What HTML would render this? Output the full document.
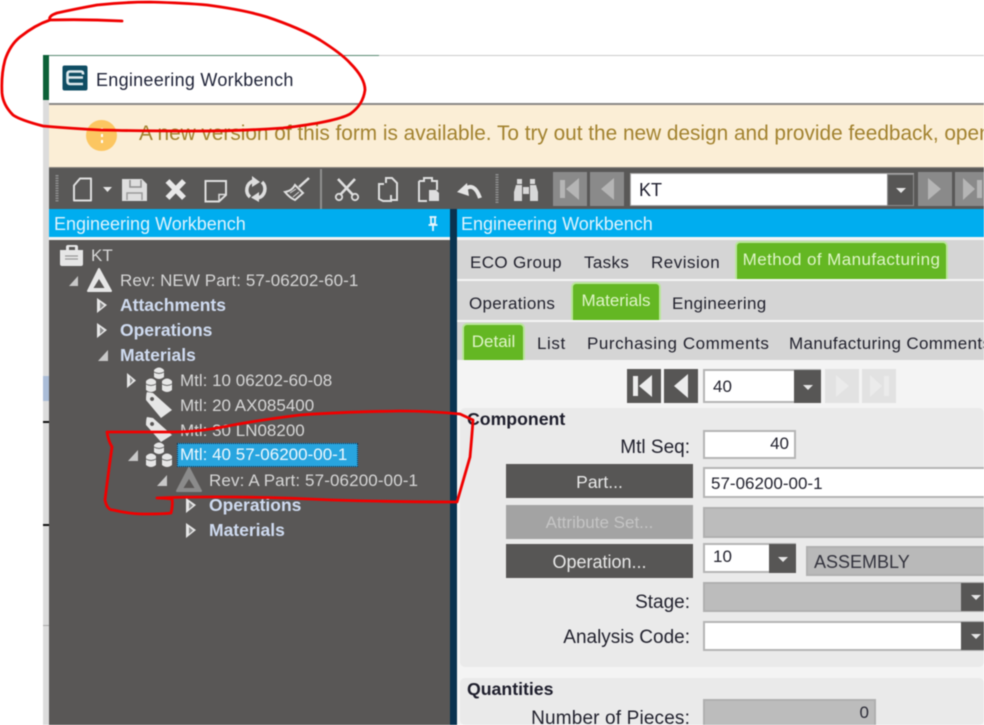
<!DOCTYPE html>
<html><head><meta charset="utf-8"><style>
html,body{margin:0;padding:0;background:#fff}
#r{position:relative;width:984px;height:725px;overflow:hidden;background:#fff;font-family:"Liberation Sans",sans-serif;filter:blur(.5px)}
#r div{position:absolute;box-sizing:border-box;white-space:nowrap}
.t{font-size:17px;line-height:20px;color:#d6d6d6}
.b{font-weight:bold;color:#cfdbf0;font-size:17.500px}
.l{font-size:17px;color:#22222e;line-height:20px}
.lb{text-align:right;width:240px;left:450px;font-size:19px}
.tab{background:#64b723;color:#dff5c8;border:2px solid #b9e59b;border-bottom:0;border-radius:5px 5px 0 0;text-align:center}
.f{background:#fff;border:2px solid #b5b5b5;color:#22222e;font-size:17px;line-height:26px}
.dis{background:#bcbcbc;border:2px solid #b0b0b0}
.btn{background:#575655;color:#e8e8e8;font-size:17.500px;text-align:center;line-height:36px}
.dd{background:#575655}
.dd:after{content:"";position:absolute;left:50%;top:50%;margin:-2px 0 0 -5px;border:5px solid transparent;border-top:5px solid #e6e6e6;border-bottom:0}
</style></head><body><div id="r">

<div style="left:43px;top:55px;width:6px;height:670px;background:#dcdcdc"></div>
<div style="left:43px;top:55px;width:6px;height:45px;background:#0d6138"></div>
<div style="left:43px;top:376px;width:6px;height:25px;background:#abbdd8"></div>
<div style="left:43px;top:421px;width:6px;height:2px;background:#111"></div>
<div style="left:43px;top:524px;width:6px;height:2px;background:#111"></div>
<div style="left:43px;top:625px;width:6px;height:1px;background:#aaa"></div>
<div style="left:49px;top:55px;width:330px;height:1px;background:#5a8a72"></div>
<div style="left:379px;top:55px;width:605px;height:1px;background:#ccc"></div>

<div style="left:49px;top:56px;width:935px;height:47px;background:#fff"></div>
<div style="left:49px;top:103px;width:935px;height:2px;background:#8a8886"></div>
<svg style="position:absolute;left:62px;top:65px" width="26" height="26" viewBox="0 0 26 26"><rect x="0.5" y="0.5" width="25" height="25" rx="2" fill="#0f4d63"/><path d="M21 9.500V8.500Q21 6.500 19 6.500H8Q5.500 6.500 5.500 9V16Q5.500 19 8 19H21M6 12.500H21" fill="none" stroke="#dfeaee" stroke-width="2.600"/></svg>
<div style="left:96px;top:69px;font-size:18px;line-height:22px;color:#1f2338;letter-spacing:.28px">Engineering Workbench</div>

<div style="left:49px;top:105px;width:935px;height:62px;background:#fbeed6"></div>
<div style="left:86px;top:120px;width:31px;height:31px;border-radius:50%;background:#fcc661"></div>
<div style="left:100.500px;top:128px;width:2px;height:2.500px;background:#fff"></div>
<div style="left:100.500px;top:134px;width:2px;height:2.500px;background:#fff"></div>
<div style="left:100.500px;top:140px;width:2px;height:2.500px;background:#fff"></div>
<div style="left:139px;top:122px;font-size:20.800px;line-height:24px;color:#a2822f">A new version of this form is available. To try out the new design and provide feedback, open</div>

<div style="left:49px;top:167px;width:935px;height:42px;background:#595857;border-top:1px solid #8a8580"></div>
<svg style="position:absolute;left:50px;top:168px" width="934" height="41" viewBox="50 168 934 41" fill="none" stroke="#dedede">
<path d="M57 175V202" stroke="#8d8d8d" stroke-width="3" stroke-dasharray="1.500 1"/>
<path d="M497 174V203" stroke="#8d8d8d" stroke-width="3" stroke-dasharray="1.500 1"/>
<path d="M80 178.500H91V200.500H74V185.500Z" stroke-width="2" stroke-linejoin="round"/>
<path d="M103 187H112L107.500 192Z" fill="#e6e6e6" stroke="none"/>
<path d="M122 179H142L147 184V201H122Z" fill="#dedede" stroke="none"/>
<path d="M130 180V187H141V180" stroke="#8e8e8e" stroke-width="1.500"/>
<path d="M127 200V193H142V200" stroke="#9a9a9a" stroke-width="1.500"/>
<path d="M167.500 181L184 198M184 181L167.500 198" stroke-width="5.500" stroke="#e8e8e8"/>
<path d="M205.500 181H226V195L219 201.500H205.500Z" stroke-width="2"/><path d="M219 201V194.500H226" stroke-width="1.500"/>
<path d="M250 197A9.500 9.500 0 0 1 253 181" stroke-width="3.500"/><path d="M252 176L260 182L252 187Z" fill="#dedede" stroke="none"/>
<path d="M262 182A9.500 9.500 0 0 1 258 198" stroke-width="3.500"/><path d="M259 192L251 197.500L259 202Z" fill="#dedede" stroke="none"/>
<path d="M309 178L299 187" stroke-width="2.500"/><path d="M295 185L303 193L295 200Q290 198 285 192Q292 191 295 185Z" stroke-width="2"/><path d="M290 193L296 189M293 197L299 192" stroke-width="1"/>
<path d="M321 169V209" stroke="#8f8f8f" stroke-width="2"/>
<path d="M338 179L353 195M355 179L340 195" stroke-width="2.600"/><circle cx="339" cy="197" r="3.200" stroke-width="1.800"/><circle cx="355" cy="197" r="3.200" stroke-width="1.800"/>
<path d="M386 183V178H392L397 183V200H384V190" stroke-width="2"/><path d="M384 184H379V199L383 201H391V195" stroke-width="2" fill="#595857"/>
<path d="M419 181H424V178H432V181H437V190M419 181V201H427" stroke-width="2"/><path d="M429 190H436L439 193V201H429Z" fill="#dedede" stroke="none"/>
<path d="M464 190Q474 181 480 198" stroke-width="4" stroke="#e4e4e4"/><path d="M457 192L467 183L469 196Z" fill="#e4e4e4" stroke="none"/>
<path d="M516 185H522V201H514V192ZM530 185H536L538 192V201H530ZM523 187H529V194H523ZM517 179H522V184H517ZM530 179H535V184H530Z" fill="#d8d8d8" stroke="none"/>
</svg>

<div style="left:553px;top:172px;width:34px;height:34px;background:#8a8a8a"></div>
<svg style="position:absolute;left:553px;top:172px" width="34" height="34"><path d="M7 8H12V26H7ZM26 6V28L13 17Z" fill="#b5b5b5"/></svg>
<div style="left:590px;top:172px;width:34px;height:34px;background:#8a8a8a"></div>
<svg style="position:absolute;left:590px;top:172px" width="34" height="34"><path d="M24 6V28L11 17Z" fill="#b5b5b5"/></svg>
<div style="left:630px;top:173px;width:284px;height:33px;background:#fff;border:1px solid #aaa;font-size:18px;line-height:32px;padding-left:8px;color:#1c1c2c">KT</div>
<div class="dd" style="left:887px;top:174px;width:27px;height:32px;border:1px solid #8d8d8d"></div>
<div style="left:918px;top:172px;width:34px;height:34px;background:#8a8a8a"></div>
<svg style="position:absolute;left:918px;top:172px" width="34" height="34"><path d="M10 6V28L23 17Z" fill="#b5b5b5"/></svg>
<div style="left:955px;top:172px;width:34px;height:34px;background:#8a8a8a"></div>
<svg style="position:absolute;left:955px;top:172px" width="34" height="34"><path d="M8 6V28L20 17Z M22 8H27V26H22Z" fill="#b5b5b5"/></svg>

<div style="left:49px;top:209px;width:401px;height:28px;background:#00adef;color:#dff3fd;font-size:18px;line-height:30px;padding-left:5px">Engineering Workbench</div>
<svg style="position:absolute;left:426px;top:216px" width="14" height="16"><path d="M3.500 1H10.500M5 1V8H9V1M2.500 9H11.500M7 9V15" fill="none" stroke="#e6f5fc" stroke-width="1.800"/></svg>
<div style="left:49px;top:237px;width:401px;height:3px;background:#f2f2f2"></div>
<div style="left:49px;top:240px;width:401px;height:485px;background:#595756"></div>
<div style="left:450px;top:209px;width:7px;height:516px;background:#0a3350"></div>
<div style="left:457px;top:209px;width:527px;height:28px;background:#00adef;color:#dff3fd;font-size:18px;line-height:30px;padding-left:4px">Engineering Workbench</div>
<div style="left:457px;top:237px;width:527px;height:488px;background:#f4f4f4"></div>

<svg style="position:absolute;left:50px;top:240px" width="220" height="310" viewBox="50 240 220 310">
<g fill="#e6e6e6">
<path d="M61 250H66V247Q66 245 68 245H76Q78 245 78 247V250H83V264Q83 266 81 266H62Q60 266 60 264V250Z"/>
<path d="M69 247H75V250H69Z" fill="#595756"/><path d="M65 256H78M65 259H78" stroke="#9a9a9a" stroke-width="1.200"/>
<path d="M99 269L111 291H88Z" stroke="#e6e6e6" stroke-width="2" stroke-linejoin="round"/>
<path d="M99 279L104.500 288H93.500Z" fill="#595756"/>
<path d="M78 276V286H69Z" fill="#c8c8c8"/>
<path d="M97 298L107 305L97 313Z"/><path d="M100 302V309L104 305.500Z" fill="#8a8a8a"/>
<path d="M97 323L107 330L97 338Z"/><path d="M100 327V334L104 330.500Z" fill="#8a8a8a"/>
<path d="M108 350V361H98Z" fill="#c8c8c8"/>
<path d="M127 373L136 380.500L127 388Z"/><path d="M130 377V384L133 380.500Z" fill="#8a8a8a"/>
<path d="M138 450V461H128Z" fill="#c8c8c8"/>
<path d="M167 475V486H157Z" fill="#c8c8c8"/>
<path d="M186 498L196 505L186 513Z"/><path d="M189 502V509L193 505.500Z" fill="#8a8a8a"/>
<path d="M186 523L196 530L186 538Z"/><path d="M189 527V534L193 530.500Z" fill="#8a8a8a"/>
<path d="M147 392L153 393L172 410L161 418L146 400Q146 394 147 392ZM152 397A2 2 0 1 0 152.100 397Z" fill-rule="evenodd"/>
<path d="M147 417L153 418L172 435L161 442L146 425Q146 419 147 417ZM152 422A2 2 0 1 0 152.100 422Z" fill-rule="evenodd"/>
<path d="M189 468L201 491H177Z" fill="#8b8b8b" stroke="#8b8b8b" stroke-width="2" stroke-linejoin="round"/>
<path d="M189 479L194.500 488H183.500Z" fill="#595756"/>
</g>
<g fill="#e6e6e6">
<path d="M154 370Q159 365 164 370V377Q159 381 154 377Z"/><path d="M146 381Q151 376 156 381V390Q151 394 146 390Z"/><path d="M162 381Q167 376 172 381V390Q167 394 162 390Z"/>
<path d="M154 372Q159 375 164 372M146 384Q151 387 156 384M162 384Q167 387 172 384" stroke="#666" fill="none"/>
<path d="M154 445Q159 440 164 445V452Q159 456 154 452Z"/><path d="M146 456Q151 451 156 456V465Q151 469 146 465Z"/><path d="M162 456Q167 451 172 456V465Q167 469 162 465Z"/>
<path d="M154 447Q159 450 164 447M146 459Q151 462 156 459M162 459Q167 462 172 459" stroke="#666" fill="none"/>
</g>
</svg>

<div class="t" style="left:91px;top:246px">KT</div>
<div class="t" style="left:120px;top:271px;letter-spacing:.08px">Rev: NEW Part: 57-06202-60-1</div>
<div class="t b" style="left:120px;top:295px">Attachments</div>
<div class="t b" style="left:120px;top:320px">Operations</div>
<div class="t b" style="left:120px;top:345px">Materials</div>
<div class="t" style="left:180px;top:371px">Mtl: 10 06202-60-08</div>
<div class="t" style="left:180px;top:396px">Mtl: 20 AX085400</div>
<div class="t" style="left:180px;top:421px">Mtl: 30 LN08200</div>
<div class="t" style="left:177px;top:443px;width:181px;height:24px;background:#28a5df;border:1px dotted #0a2a4a;color:#eef8fe;padding:1px 0 0 2px">Mtl: 40 57-06200-00-1</div>
<div class="t" style="left:209px;top:471px;letter-spacing:.12px">Rev: A Part: 57-06200-00-1</div>
<div class="t b" style="left:209px;top:495px">Operations</div>
<div class="t b" style="left:209px;top:520px">Materials</div>

<div style="left:457px;top:240px;width:527px;height:39px;background:#d5d5d5"></div>
<div style="left:457px;top:281px;width:527px;height:39px;background:#d5d5d5"></div>
<div style="left:457px;top:322px;width:527px;height:38px;background:#d5d5d5"></div>
<div class="l" style="left:470px;top:253px;letter-spacing:.35px">ECO Group</div>
<div class="l" style="left:584px;top:253px;letter-spacing:.35px">Tasks</div>
<div class="l" style="left:651px;top:253px;letter-spacing:.5px">Revision</div>
<div class="tab" style="left:735px;top:241px;width:213px;height:38px;font-size:17px;line-height:34px;letter-spacing:.42px">Method of Manufacturing</div>
<div class="l" style="left:469px;top:294px;letter-spacing:.3px">Operations</div>
<div class="tab" style="left:571px;top:282px;width:90px;height:38px;font-size:17px;line-height:34px">Materials</div>
<div class="l" style="left:672px;top:294px;letter-spacing:.35px">Engineering</div>
<div class="tab" style="left:462px;top:323px;width:63px;height:37px;font-size:17px;line-height:33px">Detail</div>
<div class="l" style="left:537px;top:334px;letter-spacing:.6px">List</div>
<div class="l" style="left:587px;top:334px;letter-spacing:.55px">Purchasing Comments</div>
<div class="l" style="left:789px;top:334px;letter-spacing:.35px">Manufacturing Comments</div>

<div style="left:627px;top:369px;width:34px;height:34px;background:#575655"></div>
<svg style="position:absolute;left:627px;top:369px" width="34" height="34"><path d="M6 7H11V27H6ZM25 6V28L12 17Z" fill="#ececec"/></svg>
<div style="left:664px;top:369px;width:34px;height:34px;background:#575655"></div>
<svg style="position:absolute;left:664px;top:369px" width="34" height="34"><path d="M24 5V29L10 17Z" fill="#ececec"/></svg>
<div class="f" style="left:703px;top:369px;width:118px;height:34px;line-height:31px;padding-left:8px">40</div>
<div class="dd" style="left:794px;top:370px;width:27px;height:33px"></div>
<div style="left:825px;top:369px;width:34px;height:34px;background:#e2e2e2"></div>
<svg style="position:absolute;left:825px;top:369px" width="34" height="34"><path d="M11 6V28L24 17Z" fill="#ebebeb"/></svg>
<div style="left:862px;top:369px;width:34px;height:34px;background:#e2e2e2"></div>
<svg style="position:absolute;left:862px;top:369px" width="34" height="34"><path d="M8 6V28L20 17Z M22 7H27V27H22Z" fill="#ebebeb"/></svg>

<div style="left:460px;top:408px;width:524px;height:259px;background:#eaeaea;border-radius:5px"></div>
<div style="left:460px;top:678px;width:524px;height:47px;background:#eaeaea;border-radius:5px"></div>
<div style="left:467px;top:409px;font-size:17.700px;font-weight:bold;line-height:20px;color:#1e1e2c">Component</div>
<div class="l lb" style="top:438px">Mtl Seq:</div>
<div class="f" style="left:703px;top:430px;width:93px;height:29px;text-align:right;padding-right:5px;line-height:24px">40</div>
<div class="btn" style="left:506px;top:464px;width:187px;height:34px">Part...</div>
<div class="f" style="left:703px;top:467px;width:290px;height:31px;padding-left:6px;line-height:29px">57-06200-00-1</div>
<div class="btn" style="left:506px;top:505px;width:187px;height:34px;background:#a3a3a3;color:#c5c5c5;font-size:17px">Attribute Set...</div>
<div class="f dis" style="left:703px;top:507px;width:290px;height:31px"></div>
<div class="btn" style="left:506px;top:544px;width:187px;height:34px;font-size:18px">Operation...</div>
<div class="f" style="left:703px;top:543px;width:93px;height:30px;padding-left:8px;line-height:24px">10</div>
<div class="dd" style="left:769px;top:544px;width:27px;height:29px"></div>
<div class="f dis" style="left:806px;top:546px;width:190px;height:30px;padding-left:6px;line-height:28px;background:#b9b9b9;color:#33333d;font-size:18px">ASSEMBLY</div>
<div class="l lb" style="top:593px">Stage:</div>
<div class="f dis" style="left:703px;top:582px;width:290px;height:30px"></div>
<div class="dd" style="left:961px;top:583px;width:30px;height:28px"></div>
<div class="l lb" style="top:628px">Analysis Code:</div>
<div class="f" style="left:703px;top:621px;width:290px;height:30px"></div>
<div class="dd" style="left:961px;top:622px;width:30px;height:28px"></div>
<div style="left:467px;top:679px;font-size:17.700px;font-weight:bold;line-height:20px;color:#1e1e2c">Quantities</div>
<div class="l lb" style="top:709px;letter-spacing:.15px">Number of Pieces:</div>
<div class="f dis" style="left:703px;top:699px;width:173px;height:30px;text-align:right;padding-right:5px;line-height:24px;color:#2a2a36">0</div>

<svg style="position:absolute;left:0;top:0" width="984" height="725" fill="none" stroke="#f00000" stroke-width="2.800" stroke-linecap="round" stroke-linejoin="round">
<path d="M122 21Q85 19 50 20Q48 16 57 13Q75 9 97 5Q125 2 150 2Q185 3 207 5Q245 10 267 17Q300 28 320 40Q342 54 350 63Q365 78 365 90Q363 105 350 114Q335 122 283 128Q240 131 200 131Q140 131 100 130Q65 128 43 126Q20 120 13 115Q3 105 2 93Q1 75 5 60Q10 45 20 37Q35 25 50 20"/>
<path d="M157 498Q230 495 333 500Q400 502 457 502L470 457Q472 435 473 420L460 414Q430 411 400 411Q340 412 300 415Q260 420 233 425Q200 432 173 432Q140 432 107 432Q108 440 112 447Q108 475 105 500Q107 510 113 510Q130 514 143 514Q165 514 171 513Q173 505 172 499Q165 498 157 498"/>
</svg>
</div></body></html>
